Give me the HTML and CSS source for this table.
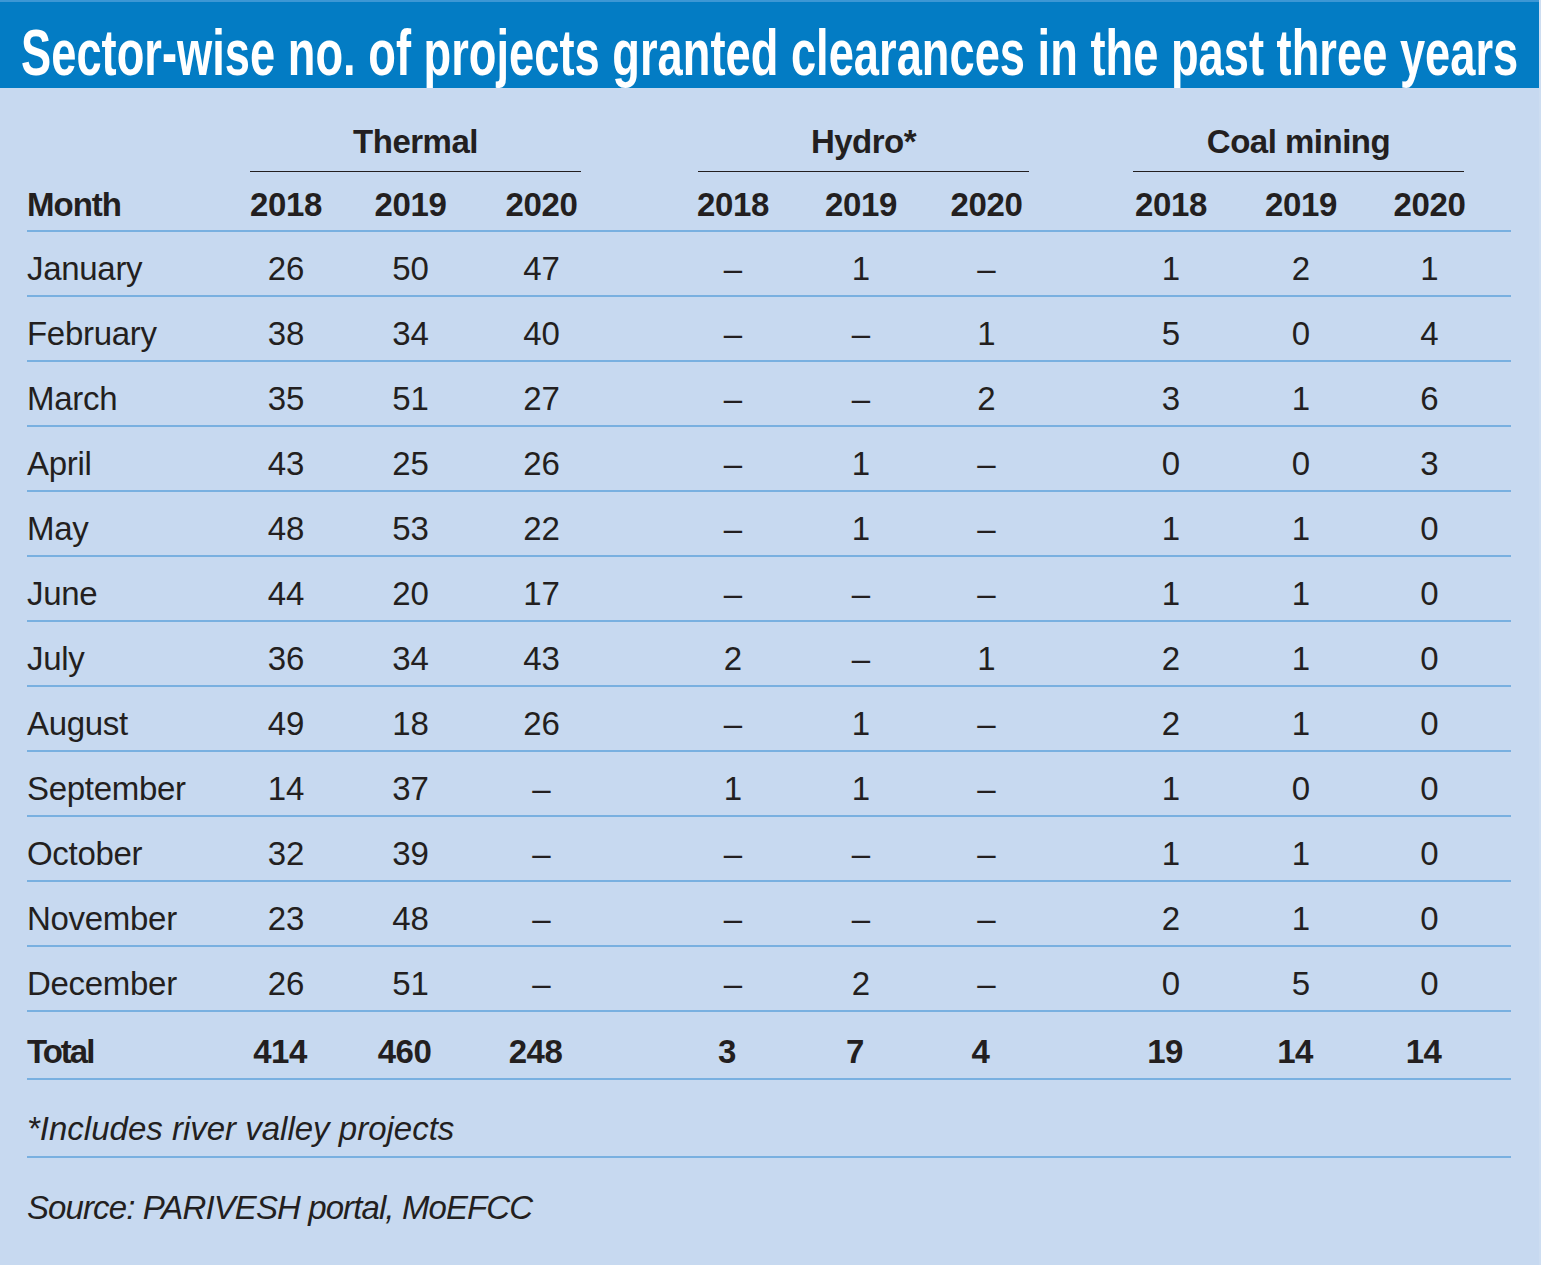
FILE: index.html
```html
<!DOCTYPE html>
<html lang="en">
<head>
<meta charset="utf-8">
<title>Sector-wise no. of projects granted clearances</title>
<link rel="stylesheet" href="styles.css">
</head>
<body>
<div class="page">
  <header class="header">
    <h1 class="title"><span class="title-text">Sector-wise no. of projects granted clearances in the past three years</span></h1>
  </header>
  <section class="table">
    <div class="grid group-row">
      <div class="group g-thermal">Thermal</div>
      <div class="group g-hydro">Hydro*</div>
      <div class="group g-coal">Coal mining</div>
    </div>
    <div class="grid year-row">
      <div class="c month">Month</div>
      <div class="c">2018</div><div class="c">2019</div><div class="c">2020</div><div class="c gap"></div>
      <div class="c">2018</div><div class="c">2019</div><div class="c">2020</div><div class="c gap"></div>
      <div class="c">2018</div><div class="c">2019</div><div class="c">2020</div><div class="c gap"></div>
    </div>
    <div class="grid row"><div class="c month">January</div><div class="c">26</div><div class="c">50</div><div class="c">47</div><div class="c gap"></div><div class="c">–</div><div class="c">1</div><div class="c">–</div><div class="c gap"></div><div class="c">1</div><div class="c">2</div><div class="c">1</div><div class="c gap"></div></div>
    <div class="grid row"><div class="c month">February</div><div class="c">38</div><div class="c">34</div><div class="c">40</div><div class="c gap"></div><div class="c">–</div><div class="c">–</div><div class="c">1</div><div class="c gap"></div><div class="c">5</div><div class="c">0</div><div class="c">4</div><div class="c gap"></div></div>
    <div class="grid row"><div class="c month">March</div><div class="c">35</div><div class="c">51</div><div class="c">27</div><div class="c gap"></div><div class="c">–</div><div class="c">–</div><div class="c">2</div><div class="c gap"></div><div class="c">3</div><div class="c">1</div><div class="c">6</div><div class="c gap"></div></div>
    <div class="grid row"><div class="c month">April</div><div class="c">43</div><div class="c">25</div><div class="c">26</div><div class="c gap"></div><div class="c">–</div><div class="c">1</div><div class="c">–</div><div class="c gap"></div><div class="c">0</div><div class="c">0</div><div class="c">3</div><div class="c gap"></div></div>
    <div class="grid row"><div class="c month">May</div><div class="c">48</div><div class="c">53</div><div class="c">22</div><div class="c gap"></div><div class="c">–</div><div class="c">1</div><div class="c">–</div><div class="c gap"></div><div class="c">1</div><div class="c">1</div><div class="c">0</div><div class="c gap"></div></div>
    <div class="grid row"><div class="c month">June</div><div class="c">44</div><div class="c">20</div><div class="c">17</div><div class="c gap"></div><div class="c">–</div><div class="c">–</div><div class="c">–</div><div class="c gap"></div><div class="c">1</div><div class="c">1</div><div class="c">0</div><div class="c gap"></div></div>
    <div class="grid row"><div class="c month">July</div><div class="c">36</div><div class="c">34</div><div class="c">43</div><div class="c gap"></div><div class="c">2</div><div class="c">–</div><div class="c">1</div><div class="c gap"></div><div class="c">2</div><div class="c">1</div><div class="c">0</div><div class="c gap"></div></div>
    <div class="grid row"><div class="c month">August</div><div class="c">49</div><div class="c">18</div><div class="c">26</div><div class="c gap"></div><div class="c">–</div><div class="c">1</div><div class="c">–</div><div class="c gap"></div><div class="c">2</div><div class="c">1</div><div class="c">0</div><div class="c gap"></div></div>
    <div class="grid row"><div class="c month">September</div><div class="c">14</div><div class="c">37</div><div class="c">–</div><div class="c gap"></div><div class="c">1</div><div class="c">1</div><div class="c">–</div><div class="c gap"></div><div class="c">1</div><div class="c">0</div><div class="c">0</div><div class="c gap"></div></div>
    <div class="grid row"><div class="c month">October</div><div class="c">32</div><div class="c">39</div><div class="c">–</div><div class="c gap"></div><div class="c">–</div><div class="c">–</div><div class="c">–</div><div class="c gap"></div><div class="c">1</div><div class="c">1</div><div class="c">0</div><div class="c gap"></div></div>
    <div class="grid row"><div class="c month">November</div><div class="c">23</div><div class="c">48</div><div class="c">–</div><div class="c gap"></div><div class="c">–</div><div class="c">–</div><div class="c">–</div><div class="c gap"></div><div class="c">2</div><div class="c">1</div><div class="c">0</div><div class="c gap"></div></div>
    <div class="grid row"><div class="c month">December</div><div class="c">26</div><div class="c">51</div><div class="c">–</div><div class="c gap"></div><div class="c">–</div><div class="c">2</div><div class="c">–</div><div class="c gap"></div><div class="c">0</div><div class="c">5</div><div class="c">0</div><div class="c gap"></div></div>
    <div class="grid row total-row"><div class="c month total-label">Total</div><div class="c t">414</div><div class="c t">460</div><div class="c t">248</div><div class="c gap"></div><div class="c t">3</div><div class="c t">7</div><div class="c t">4</div><div class="c gap"></div><div class="c t">19</div><div class="c t">14</div><div class="c t">14</div><div class="c gap"></div></div>
    <p class="note">*Includes river valley projects</p>
    <p class="source">Source: PARIVESH portal, MoEFCC</p>
  </section>
</div>
</body>
</html>
```
FILE: styles.css
```css
html, body {
  margin: 0;
  padding: 0;
}
body {
  background: #c7d9f0;
  color: #231f20;
  font-family: "Liberation Sans", Arial, sans-serif;
}
.page {
  width: 1541px;
  height: 1265px;
  box-sizing: border-box;
  border-right: 2px solid rgba(255, 255, 255, 0.12);
  background: #c7d9f0;
  overflow: hidden;
}
.header {
  box-sizing: border-box;
  height: 88px;
  background: #037cc4;
  border-top: 2px solid #3c97d5;
  padding: 19px 0 0 21px;
}
.title {
  margin: 0;
  font-size: 64px;
  line-height: 64px;
  font-weight: 700;
  color: #ffffff;
  white-space: nowrap;
}
.title-text {
  display: inline-block;
  transform: scaleX(0.7075);
  transform-origin: 0 0;
}
.table {
  padding: 0 28px 0 27px;
  font-size: 33px;
}
.grid {
  display: grid;
  grid-template-columns: 197px 124px 125px 137px 59px 128px 128px 123px 59px 128px 132px 125px 21px;
}
.group-row {
  padding-top: 37px;
}
.group {
  font-weight: 700;
  letter-spacing: -0.5px;
  line-height: 33px;
  padding-bottom: 13px;
  border-bottom: 1px solid #231f20;
  text-align: center;
}
.g-thermal {
  grid-column: 2 / span 3;
  margin: 0 29px 0 26px;
}
.g-hydro {
  grid-column: 6 / span 3;
  margin: 0 19px 0 29px;
}
.g-coal {
  grid-column: 10 / span 3;
  margin: 0 28px 0 26px;
}
.year-row {
  border-bottom: 2px solid #79b0e0;
}
.year-row .c {
  font-weight: 700;
  letter-spacing: -0.4px;
  padding: 16px 0 9px;
  line-height: 33px;
}
.year-row .month {
  letter-spacing: -1px;
}
.c {
  text-align: center;
  white-space: nowrap;
}
.c.month {
  text-align: left;
}
.row {
  border-bottom: 2px solid #79b0e0;
}
.row .c {
  padding-top: 10px;
  line-height: 53px;
}
.row .c.month {
  letter-spacing: -0.3px;
}
.total-row .c {
  padding-top: 14px;
  line-height: 52px;
  font-weight: 700;
  letter-spacing: -0.5px;
}
.total-row .c.t {
  padding-right: 12px;
}
.total-row .c.total-label {
  letter-spacing: -2px;
}
.note,
.source {
  margin: 0;
  font-style: italic;
  line-height: 33px;
}
.note {
  padding: 32px 0 11px;
  border-bottom: 2px solid #79b0e0;
}
.source {
  padding-top: 33px;
  letter-spacing: -0.9px;
}
```
